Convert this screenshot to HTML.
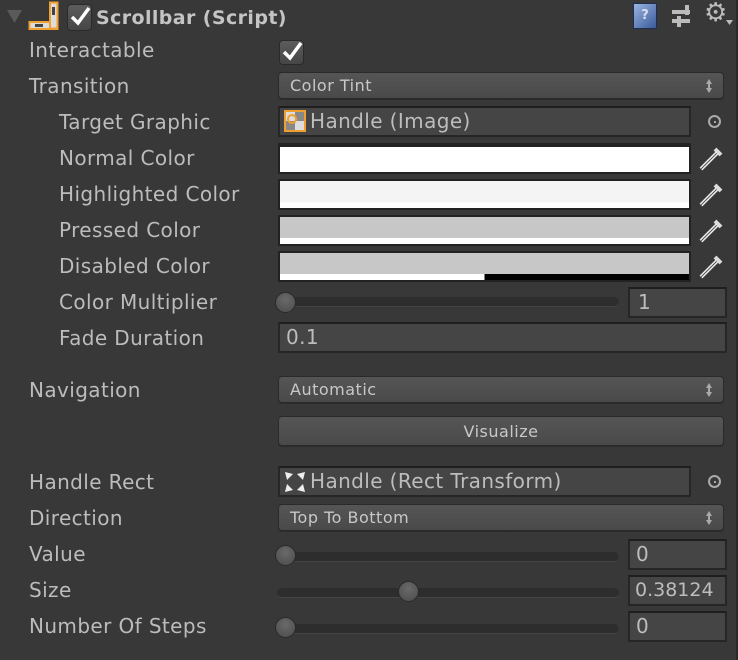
<!DOCTYPE html>
<html><head><style>
body{margin:0;width:738px;height:660px;background:#383838;overflow:hidden;font-family:"DejaVu Sans",sans-serif;position:relative}
.a{position:absolute}
.l{position:absolute;color:#bcbcbc;font-size:20px;line-height:24px;letter-spacing:0.4px;margin-top:1px}
.dd{position:absolute;left:278px;width:446px;height:27px;border-radius:4px;background:linear-gradient(#555,#4a4a4a);border:1px solid #2a2a2a;box-shadow:0 1px 0 #2c2c2c;color:#c8c8c8;font-size:16px;line-height:26px;box-sizing:border-box;padding-left:11px;letter-spacing:0.5px}
.arr{position:absolute;right:10px;top:6px}
.fld{position:absolute;background:#454545;border:2px solid #262626;border-top-color:#1e1e1e;box-sizing:border-box;color:#bdbdbd;font-size:20px;line-height:26px;letter-spacing:0.4px}
.col{position:absolute;left:278px;width:413px;height:31px;border:2px solid #222;box-sizing:border-box}
.trk{position:absolute;left:277px;width:342px;height:9px;border-radius:5px;background:#2d2d2d;border-bottom:1px solid #444}
.knob{position:absolute;width:19px;height:19px;border-radius:50%;background:radial-gradient(circle at 50% 35%,#6a6a6a,#4a4a4a);border:1px solid #2a2a2a}
.pick{position:absolute;left:698px}
.tgt{position:absolute;left:708px;width:13px;height:13px;border:2px solid #aaa;border-radius:50%;box-sizing:border-box}
.tgt:after{content:"";position:absolute;left:3.5px;top:3.5px;width:2px;height:2px;background:#aaa}
</style></head><body>
<div class="a" style="right:0;top:0;width:2px;height:660px;background:#2a2a2a"></div>
<svg class="a" style="left:6px;top:9px" width="18" height="16"><polygon points="1,1 16,1 8.5,14" fill="#5a5a5a"/></svg>
<svg class="a" style="left:28px;top:1px" width="32" height="30"><rect x="1.5" y="21" width="28" height="7" fill="#ddd" stroke="#f0a030" stroke-width="2"/><rect x="22" y="1.5" width="7.5" height="26" fill="#ddd" stroke="#f0a030" stroke-width="2"/><rect x="7" y="23" width="8" height="3" fill="#444"/><rect x="24" y="6" width="3" height="8" fill="#444"/></svg>
<div class="a" style="left:67px;top:4px;width:23px;height:25px;border-radius:4px;background:linear-gradient(#5c5c5c,#464646);border:1px solid #2a2a2a"></div>
<svg class="a" style="left:68px;top:4px" width="24" height="24"><path d="M4 13 L10 19 L21 4" stroke="#fff" stroke-width="3.5" fill="none"/></svg>
<div class="l" style="left:96px;top:5px;font-weight:bold;color:#c4c4c4;font-size:19px;letter-spacing:0.4px">Scrollbar (Script)</div>
<div class="a" style="left:633px;top:3px;width:24px;height:26px;background:linear-gradient(135deg,#9ab4e0,#3a5a9a);border:1px solid #1e2e50;box-sizing:border-box;color:#dde;font-size:13px;text-align:center;line-height:24px;font-weight:bold">?</div>
<svg class="a" style="left:670px;top:3px" width="24" height="26"><rect x="2" y="7" width="18" height="4" fill="#bbb"/><rect x="2" y="16" width="18" height="4" fill="#bbb"/><rect x="15" y="2" width="4" height="10" fill="#bbb"/><rect x="7" y="13" width="4" height="11" fill="#bbb"/></svg>
<div class="a" style="left:704px;top:-2px;color:#bbb;font-size:26px">⚙</div>
<svg class="a" style="left:726px;top:20px" width="8" height="6"><polygon points="0,0 7,0 3.5,5" fill="#bbb"/></svg>

<div class="l" style="left:29px;top:37px">Interactable</div>
<div class="a" style="left:279px;top:40px;width:23px;height:23px;border-radius:4px;background:linear-gradient(#5c5c5c,#464646);border:1px solid #2a2a2a"></div>
<svg class="a" style="left:280px;top:39px" width="24" height="24"><path d="M4 13 L10 19 L21 4" stroke="#fff" stroke-width="3.5" fill="none"/></svg>

<div class="l" style="left:29px;top:73px">Transition</div>
<div class="dd" style="top:72px">Color Tint<svg class="arr" width="8" height="14"><polygon points="4,0 7,5 1,5" fill="#aaa"/><polygon points="4,14 7,9 1,9" fill="#aaa"/><rect x="3" y="5" width="2" height="4" fill="#aaa"/></svg></div>

<div class="l" style="left:59px;top:109px">Target Graphic</div>
<div class="fld" style="left:278px;top:106px;width:413px;height:31px;padding-left:30px">Handle (Image)</div>
<svg class="a" style="left:284px;top:110px" width="22" height="22"><rect x="1" y="1" width="20" height="20" fill="#ddd" stroke="#f0a030" stroke-width="2"/><rect x="11" y="2" width="9" height="9" fill="#888"/><rect x="2" y="11" width="9" height="9" fill="#888"/><circle cx="8" cy="9" r="4" fill="none" stroke="#f0a030" stroke-width="2"/></svg>
<div class="tgt" style="top:115px"></div>

<div class="l" style="left:59px;top:145px">Normal Color</div>
<div class="col" style="top:143px;background:#fff;border-top:4px solid #222"></div>
<div class="l" style="left:59px;top:181px">Highlighted Color</div>
<div class="col" style="top:179px;background:linear-gradient(#f4f4f4 0 80%,#fff 80%)"></div>
<div class="l" style="left:59px;top:217px">Pressed Color</div>
<div class="col" style="top:215px;background:linear-gradient(#c7c7c7 0 78%,#fff 78%)"></div>
<div class="l" style="left:59px;top:253px">Disabled Color</div>
<div class="col" style="top:251px;background:linear-gradient(#c7c7c7 0 78%,transparent 78%),linear-gradient(90deg,#fff 50%,#000 50%)"></div>
<svg class="pick" style="top:146px" width="26" height="26"><path d="M3 23 L20 6" stroke="#eee" stroke-width="4"/><path d="M3 23 L20 6" stroke="#555" stroke-width="1"/><path d="M17 3 L23 9" stroke="#ddd" stroke-width="4"/></svg>
<svg class="pick" style="top:182px" width="26" height="26"><path d="M3 23 L20 6" stroke="#eee" stroke-width="4"/><path d="M3 23 L20 6" stroke="#555" stroke-width="1"/><path d="M17 3 L23 9" stroke="#ddd" stroke-width="4"/></svg>
<svg class="pick" style="top:218px" width="26" height="26"><path d="M3 23 L20 6" stroke="#eee" stroke-width="4"/><path d="M3 23 L20 6" stroke="#555" stroke-width="1"/><path d="M17 3 L23 9" stroke="#ddd" stroke-width="4"/></svg>
<svg class="pick" style="top:254px" width="26" height="26"><path d="M3 23 L20 6" stroke="#eee" stroke-width="4"/><path d="M3 23 L20 6" stroke="#555" stroke-width="1"/><path d="M17 3 L23 9" stroke="#ddd" stroke-width="4"/></svg>

<div class="l" style="left:59px;top:289px">Color Multiplier</div>
<div class="trk" style="top:297px"></div><div class="knob" style="left:275px;top:292px"></div>
<div class="fld" style="left:628px;top:287px;width:99px;height:31px;padding-left:8px">1</div>
<div class="l" style="left:59px;top:325px">Fade Duration</div>
<div class="fld" style="left:278px;top:322px;width:449px;height:31px;padding-left:6px">0.1</div>

<div class="l" style="left:29px;top:377px">Navigation</div>
<div class="dd" style="top:376px">Automatic<svg class="arr" width="8" height="14"><polygon points="4,0 7,5 1,5" fill="#aaa"/><polygon points="4,14 7,9 1,9" fill="#aaa"/><rect x="3" y="5" width="2" height="4" fill="#aaa"/></svg></div>
<div class="dd" style="top:416px;height:30px;text-align:center;padding:0;line-height:29px">Visualize</div>

<div class="l" style="left:29px;top:469px">Handle Rect</div>
<div class="fld" style="left:278px;top:466px;width:413px;height:31px;padding-left:30px">Handle (Rect Transform)</div>
<svg class="a" style="left:283px;top:470px" width="24" height="24"><g fill="#eee"><polygon points="2,2 10,4 4,10"/><polygon points="22,2 14,4 20,10"/><polygon points="2,22 10,20 4,14"/><polygon points="22,22 14,20 20,14"/></g></svg>
<div class="tgt" style="top:475px"></div>
<div class="l" style="left:29px;top:505px">Direction</div>
<div class="dd" style="top:504px">Top To Bottom<svg class="arr" width="8" height="14"><polygon points="4,0 7,5 1,5" fill="#aaa"/><polygon points="4,14 7,9 1,9" fill="#aaa"/><rect x="3" y="5" width="2" height="4" fill="#aaa"/></svg></div>

<div class="l" style="left:29px;top:541px">Value</div>
<div class="trk" style="top:552px"></div><div class="knob" style="left:275px;top:545px"></div>
<div class="fld" style="left:628px;top:539px;width:99px;height:31px;padding-left:6px">0</div>
<div class="l" style="left:29px;top:577px">Size</div>
<div class="trk" style="top:588px"></div><div class="knob" style="left:398px;top:581px"></div>
<div class="fld" style="left:628px;top:575px;width:99px;height:31px;padding-left:5px;letter-spacing:0;font-size:19px">0.38124</div>
<div class="l" style="left:29px;top:613px">Number Of Steps</div>
<div class="trk" style="top:624px"></div><div class="knob" style="left:275px;top:617px"></div>
<div class="fld" style="left:628px;top:611px;width:99px;height:31px;padding-left:6px">0</div>
</body></html>
